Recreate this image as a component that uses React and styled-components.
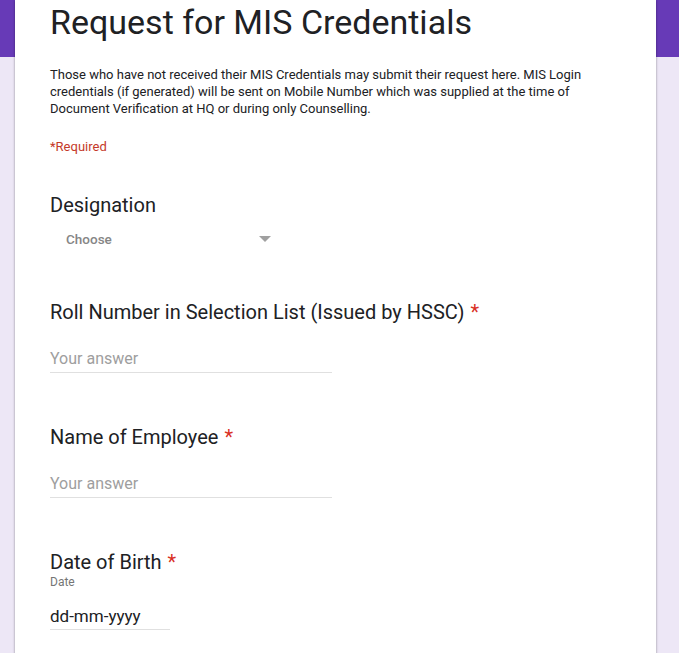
import React from "react";
import styled, { createGlobalStyle } from "styled-components";

const GlobalStyle = createGlobalStyle`
  html, body {
    margin: 0;
    padding: 0;
  }
  body {
    font-family: Roboto, "Liberation Sans", Arial, sans-serif;
    background: linear-gradient(#673ab7 0, #673ab7 57px, #ede7f6 57px);
    min-height: 653px;
    overflow: hidden;
  }
`;

const Page = styled.div`
  min-height: 653px;
`;

const Card = styled.div`
  margin: 0 23px 0 15px;
  min-height: 660px;
  padding: 2px 35px 0;
  background: #fff;
  box-shadow: 0 1px 2px rgba(0, 0, 0, 0.25), 0 0 3px rgba(0, 0, 0, 0.18);
`;

const Title = styled.h1`
  margin: 0;
  font-size: 34px;
  line-height: 40px;
  font-weight: 400;
  color: #202124;
`;

const Description = styled.p`
  margin: 24px 0 0;
  font-size: 13px;
  line-height: 17px;
  color: #202124;
  max-width: 545px;
`;

const Required = styled.div`
  margin-top: 21px;
  font-size: 13px;
  line-height: 17px;
  color: #c53929;
`;

const Question = styled.div`
  display: flex;
  flex-direction: column;
  margin-top: ${(p) => p.$top}px;
`;

const Label = styled.div`
  font-size: 20px;
  line-height: 24px;
  color: #202124;
`;

const Star = styled.span`
  color: #d93025;
  margin-left: 6px;
`;

const Dropdown = styled.div`
  display: flex;
  align-items: center;
  justify-content: space-between;
  width: 205px;
  height: 36px;
  margin-top: 4px;
  padding: 0 0 0 16px;
  font-size: 13.5px;
  font-weight: 500;
  color: #868686;
`;

const Caret = styled.span`
  width: 0;
  height: 0;
  border-left: 6px solid transparent;
  border-right: 6px solid transparent;
  border-top: 6px solid #a0a0a0;
`;

const TextField = styled.div`
  width: ${(p) => p.$width}px;
  margin-top: ${(p) => p.$top}px;
  margin-bottom: 9px;
  padding-bottom: 1px;
  border-bottom: 1px solid #e0e0e0;
  font-size: ${(p) => (p.$filled ? 17 : 16)}px;
  line-height: 24px;
  color: ${(p) => (p.$filled ? "#202124" : "#9e9e9e")};
`;

const Hint = styled.div`
  margin-top: 1px;
  font-size: 12px;
  line-height: 14px;
  color: #757575;
`;

export default function App() {
  return (
    <Page>
      <GlobalStyle />
      <Card>
        <Title>Request for MIS Credentials</Title>
        <Description>
          Those who have not received their MIS Credentials may submit their request here. MIS Login
          credentials (if generated) will be sent on Mobile Number which was supplied at the time of
          Document Verification at HQ or during only Counselling.
        </Description>
        <Required>*Required</Required>

        <Question $top={38}>
          <Label>Designation</Label>
          <Dropdown>
            Choose
            <Caret />
          </Dropdown>
        </Question>

        <Question $top={43}>
          <Label>
            Roll Number in Selection List (Issued by HSSC)<Star>*</Star>
          </Label>
          <TextField $width={282} $top={23}>Your answer</TextField>
        </Question>

        <Question $top={43}>
          <Label>
            Name of Employee<Star>*</Star>
          </Label>
          <TextField $width={282} $top={23}>Your answer</TextField>
        </Question>

        <Question $top={43}>
          <Label>
            Date of Birth<Star>*</Star>
          </Label>
          <Hint>Date</Hint>
          <TextField $width={120} $top={15} $filled>dd-mm-yyyy</TextField>
        </Question>
      </Card>
    </Page>
  );
}
